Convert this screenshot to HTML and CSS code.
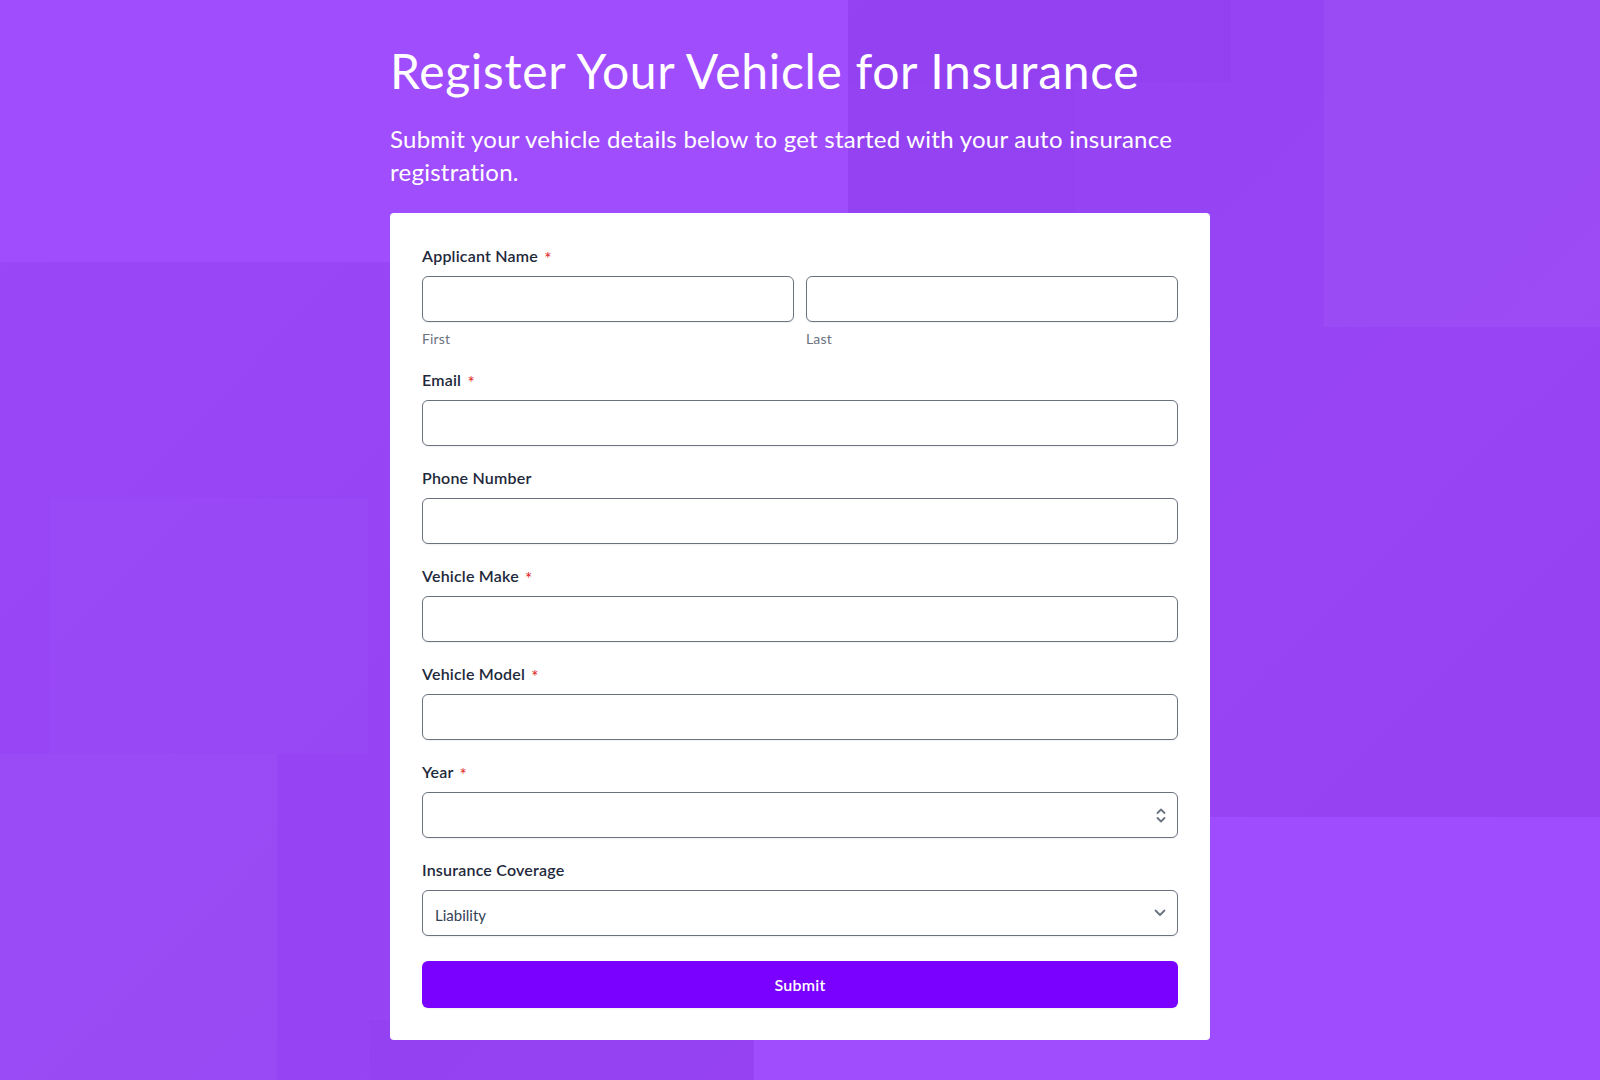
FILE: index.html
```html
<!DOCTYPE html>
<html lang="en">
<head>
<meta charset="utf-8">
<title>Register Your Vehicle for Insurance</title>
<link rel="stylesheet" href="styles.css">
</head>
<body>
<main class="page">
  <div class="wrap">
    <h1 class="title">Register Your Vehicle for Insurance</h1>
    <p class="intro">Submit your vehicle details below to get started with your auto insurance registration.</p>
    <form class="card">
      <div class="field">
        <label class="label">Applicant Name <span class="req">*</span></label>
        <div class="name-row">
          <div class="name-col">
            <input class="input" type="text">
            <span class="sub">First</span>
          </div>
          <div class="name-col">
            <input class="input" type="text">
            <span class="sub">Last</span>
          </div>
        </div>
      </div>
      <div class="field">
        <label class="label">Email <span class="req">*</span></label>
        <input class="input" type="email">
      </div>
      <div class="field">
        <label class="label">Phone Number</label>
        <input class="input" type="tel">
      </div>
      <div class="field">
        <label class="label">Vehicle Make <span class="req">*</span></label>
        <input class="input" type="text">
      </div>
      <div class="field">
        <label class="label">Vehicle Model <span class="req">*</span></label>
        <input class="input" type="text">
      </div>
      <div class="field">
        <label class="label">Year <span class="req">*</span></label>
        <div class="control">
          <input class="input input-num" type="text">
          <svg class="icon icon-spin" width="10" height="15" viewBox="0 0 10 15" fill="none" stroke="#6b7280" stroke-width="1.8" stroke-linecap="round" stroke-linejoin="round"><path d="M1.5 5 L5 1.5 L8.5 5"/><path d="M1.5 10 L5 13.5 L8.5 10"/></svg>
        </div>
      </div>
      <div class="field">
        <label class="label">Insurance Coverage</label>
        <div class="control">
          <select class="input select">
            <option>Liability</option>
            <option>Collision</option>
            <option>Comprehensive</option>
            <option>Full Coverage</option>
          </select>
          <svg class="icon icon-chev" width="12" height="8" viewBox="0 0 12 8" fill="none" stroke="#6b7280" stroke-width="1.8" stroke-linecap="round" stroke-linejoin="round"><path d="M1.5 1.5 L6 6 L10.5 1.5"/></svg>
        </div>
      </div>
      <button class="submit" type="button">Submit</button>
    </form>
  </div>
</main>
</body>
</html>
```
FILE: styles.css
```css
* { box-sizing: border-box; }
html, body { margin: 0; padding: 0; }
body {
  font-family: Lato, "Noto Sans", sans-serif;
  font-variant-ligatures: none;
  min-height: 1080px;
  background-color: #9845f5;
  background-image:
    linear-gradient(#a04dfd, #a04dfd),
    linear-gradient(rgba(120,40,220,0.12), rgba(120,40,220,0.12)),
    linear-gradient(rgba(120,40,220,0.08), rgba(120,40,220,0.08)),
    linear-gradient(rgba(255,255,255,0.04), rgba(255,255,255,0.04)),
    linear-gradient(rgba(255,255,255,0.015), rgba(255,255,255,0.015)),
    linear-gradient(#9e4cfd, #9e4cfd),
    linear-gradient(rgba(255,255,255,0.03), rgba(255,255,255,0.03)),
    linear-gradient(rgba(120,40,220,0.10), rgba(120,40,220,0.10)),
    linear-gradient(#9f4dfd, #9f4dfd),
    linear-gradient(135deg, #9a47f8 0%, #9644f3 45%, #9844f5 70%, #9440f0 100%);
  background-size:
    848px 262px,
    384px 82px,
    228px 214px,
    276px 327px,
    318px 255px,
    400px 263px,
    277px 326px,
    384px 60px,
    864px 60px,
    100% 100%;
  background-position:
    0 0,
    847px 0,
    847px 82px,
    1324px 0,
    50px 499px,
    1200px 817px,
    0 754px,
    369px 1020px,
    754px 1040px,
    0 0;
  background-repeat: no-repeat;
}
.page {
  display: flex;
  justify-content: center;
  padding: 40px 0 40px;
}
.wrap {
  width: 820px;
}
.title {
  margin: 0 0 20px;
  font-size: 48px;
  line-height: 62px;
  font-weight: 400;
  letter-spacing: 0.68px;
  color: #ffffff;
}
.intro {
  margin: 0 0 25px;
  font-size: 24px;
  line-height: 33px;
  font-weight: 400;
  letter-spacing: 0.25px;
  color: #ffffff;
}
.card {
  background: #ffffff;
  border-radius: 4px;
  padding: 33px 32px 32px;
  display: flex;
  flex-direction: column;
}
.field {
  display: flex;
  flex-direction: column;
  margin-bottom: 22px;
}
.label {
  font-size: 16px;
  line-height: 20px;
  font-weight: 600;
  letter-spacing: 0.2px;
  color: #1e293b;
  margin-bottom: 10px;
}
.req {
  color: #e02424;
  font-size: 17px;
  line-height: 12px;
  font-weight: 400;
  margin-left: 2px;
  vertical-align: -3px;
}
.name-row {
  display: grid;
  grid-template-columns: 1fr 1fr;
  gap: 12px;
}
.name-col {
  display: flex;
  flex-direction: column;
}
.sub {
  margin-top: 7px;
  font-size: 14px;
  line-height: 19px;
  letter-spacing: 0.15px;
  color: #6b7280;
}
.input {
  display: block;
  width: 100%;
  height: 46px;
  border: 1px solid #6b7280;
  border-radius: 6px;
  background: #ffffff;
  box-shadow: 0 1px 2px rgba(0,0,0,0.06);
  padding: 0 12px;
  font-family: Lato, "Noto Sans", sans-serif;
  font-size: 15px;
  color: #334155;
  outline: none;
}
.control {
  position: relative;
}
.select {
  -webkit-appearance: none;
  appearance: none;
  padding-right: 36px;
  padding-top: 3px;
}
.icon {
  position: absolute;
  pointer-events: none;
}
.icon-spin {
  right: 12px;
  top: 16px;
}
.icon-chev {
  right: 12px;
  top: 19px;
}
.submit {
  margin-top: 3px;
  height: 47px;
  border: none;
  border-radius: 6px;
  background: #7a00ff;
  color: #ffffff;
  font-family: Lato, "Noto Sans", sans-serif;
  font-size: 16px;
  font-weight: 600;
  letter-spacing: 0.2px;
  box-shadow: 0 1px 2px rgba(0,0,0,0.06);
}
```
